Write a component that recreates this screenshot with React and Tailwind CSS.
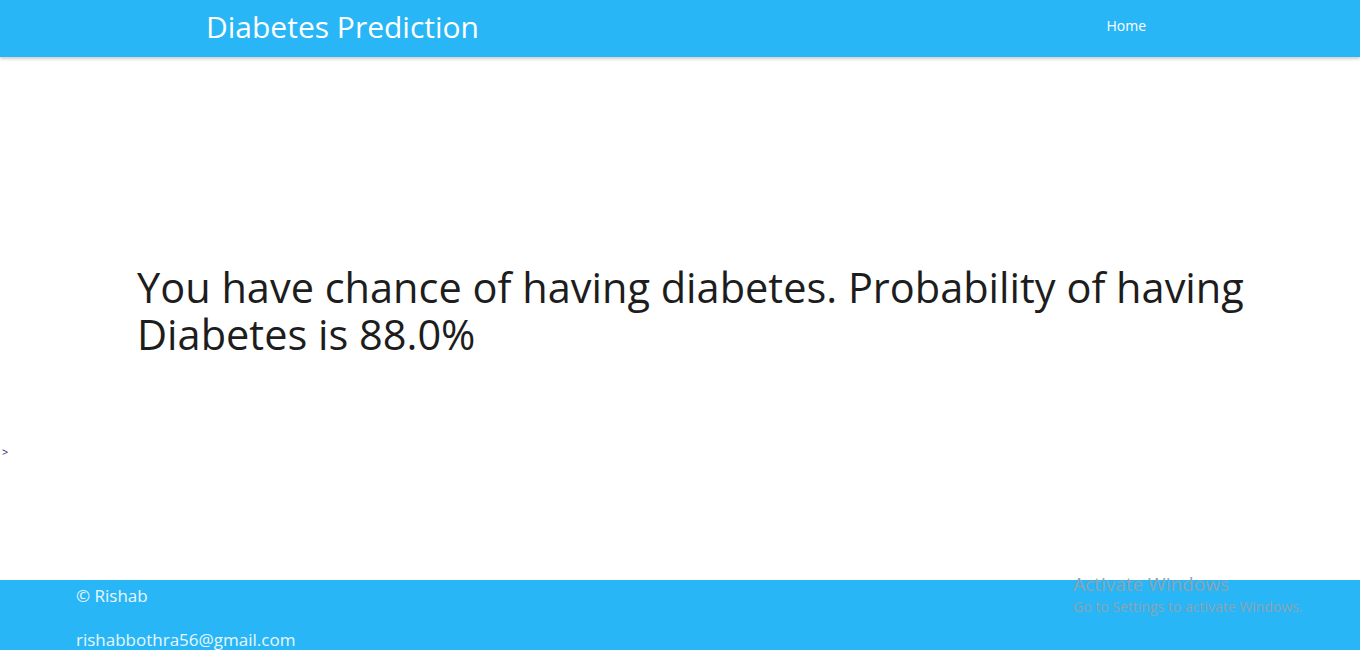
import React from 'react';

const App = () => {
  return (
    <div className="relative w-full h-[650px] overflow-hidden bg-white font-['Open_Sans',sans-serif]">
      <nav className="h-[57px] bg-[#29b6f6] shadow-[0_2px_3px_rgba(0,0,0,0.2)] relative z-10">
        <div className="w-[952px] ml-[204px] h-full flex items-center justify-between">
          <a className="text-white text-[30px] leading-none ml-[2px] mb-[4px]">Diabetes Prediction</a>
          <a className="text-white text-[14px] mr-[10px] mb-[6px]">Home</a>
        </div>
      </nav>

      <main className="h-[523px] flex flex-col">
        <div className="pt-[207px] pl-[137px] w-[1270px]">
          <h3 className="text-[#1d1d1d] text-[41.5px] leading-[47px]">
            You have chance of having diabetes. Probability of having Diabetes is 88.0%
          </h3>
        </div>
        <div className="mt-[88px] ml-[2px] text-[11px] text-[#1a1a6e] leading-none">&gt;</div>
      </main>

      <footer className="h-[70px] bg-[#29b6f6] pl-[76px] pt-[4px] text-[#e8f6fd] text-[17px]">
        <p className="leading-[24px]">© Rishab</p>
        <p className="mt-[20px] leading-[24px]">rishabbothra56@gmail.com</p>
      </footer>

      <div className="absolute left-[1073px] top-[575px] text-[#8aa4b4] leading-none">
        <div className="text-[19px]">Activate Windows</div>
        <div className="text-[14px] mt-[6px]">Go to Settings to activate Windows.</div>
      </div>
    </div>
  );
};

export default App;
